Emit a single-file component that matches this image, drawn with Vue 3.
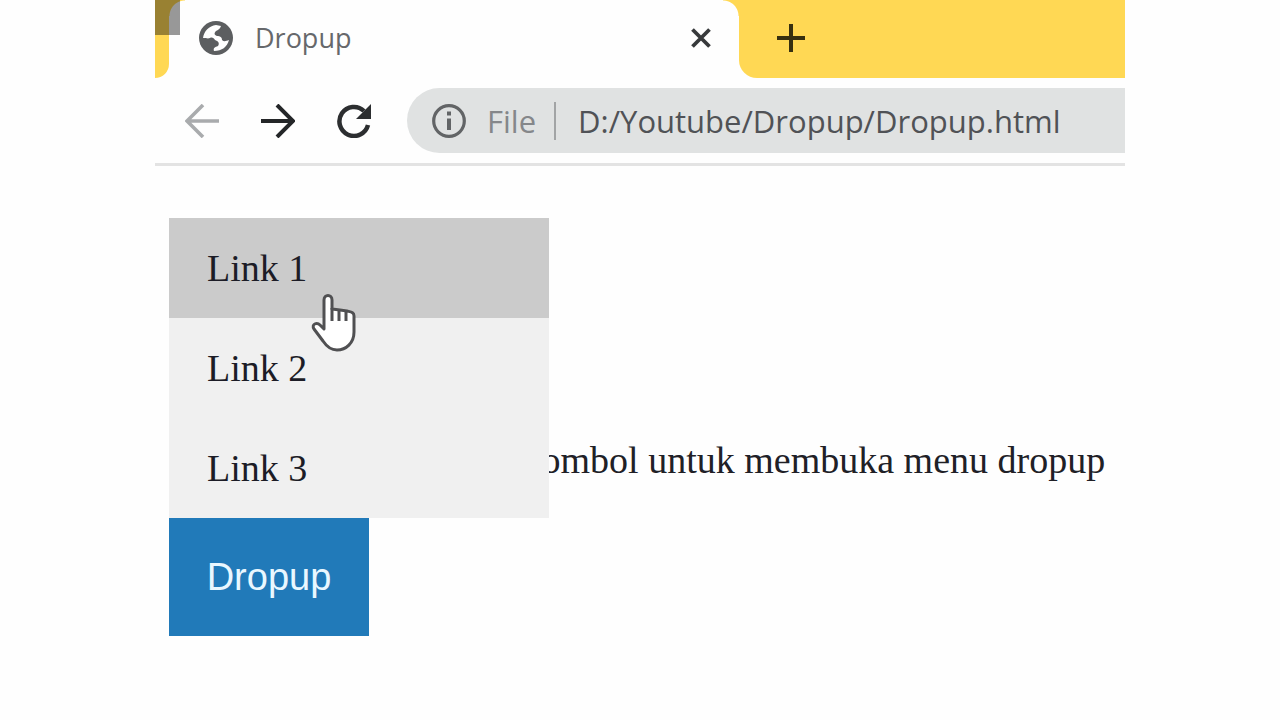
<script setup>
import { ref } from 'vue'

const url = ref('D:/Youtube/Dropup/Dropup.html')
const links = ['Link 1', 'Link 2', 'Link 3']
</script>

<template>
  <div class="window">
    <header>
      <div class="tab-strip">
        <div class="strip-start"></div>
        <div class="tab">
          <svg class="globe" viewBox="0 0 34 34" aria-hidden="true">
            <circle cx="17" cy="17" r="17" fill="#5c5e60" />
            <path d="M4 17C5 10 10 5 17 4l5 1c-1 3-3 4-5 5-2 2-2 4 1 5 3 0 5 1 5 4 2 2 4 1 7 0-2 7-7 11-15 11-1-3 1-4 4-5 2-3 0-5-3-6-1-2-3-3-5-2-2 1-4 0-7 0z" fill="#fff" />
          </svg>
          <span class="tab-title">Dropup</span>
          <button class="icon-button close" aria-label="Close tab">
            <svg viewBox="0 0 20 20" width="20" height="20"><path d="M1.500 1.500l17 17M18.500 1.500l-17 17" stroke="#37393b" stroke-width="3.800" /></svg>
          </button>
        </div>
        <div class="strip-rest">
          <button class="icon-button" aria-label="New tab">
            <svg viewBox="0 0 30 30" width="30" height="30"><path d="M15 1v28M1 15h28" stroke="#37300f" stroke-width="4" /></svg>
          </button>
        </div>
        <div class="shade"></div>
      </div>

      <div class="toolbar">
        <nav class="history">
          <button class="icon-button" aria-label="Back">
            <svg viewBox="0 0 34 34" width="34" height="34"><path d="M34 17H3M18 1L2 17l16 16" fill="none" stroke="#a9abad" stroke-width="3.600" /></svg>
          </button>
          <button class="icon-button" aria-label="Forward">
            <svg viewBox="0 0 34 34" width="34" height="34"><path d="M0 17h31M16 1l16 16-16 16" fill="none" stroke="#242628" stroke-width="4" /></svg>
          </button>
          <button class="icon-button" aria-label="Reload">
            <svg viewBox="0 0 34 34" width="34" height="34">
              <path d="M31 21A14.500 14.500 0 1 1 27 7" fill="none" stroke="#2c2e30" stroke-width="4.500" />
              <path d="M34 0v15H19z" fill="#2c2e30" />
            </svg>
          </button>
        </nav>
        <div class="address">
          <svg viewBox="0 0 34 34" width="34" height="34" aria-hidden="true">
            <circle cx="17" cy="17" r="15.300" fill="none" stroke="#626466" stroke-width="3.200" />
            <path d="M17 7.500v4M17 14.500v11.500" stroke="#626466" stroke-width="4" />
          </svg>
          <span class="scheme">File</span>
          <input v-model="url" class="url" type="text" aria-label="Address" spellcheck="false" />
        </div>
      </div>
    </header>

    <main>
      <p>tombol untuk membuka menu dropup</p>
      <div class="dropup">
        <div class="menu">
          <a v-for="(link, i) in links" :key="link" href="#" :class="{ hovered: i === 0 }">{{ link }}</a>
          <svg class="pointer" viewBox="0 0 46 60" width="46" height="60" aria-hidden="true">
            <path d="M13 36V7c0-6 8-6 8 0v9l8 1 7 1c4 1 7 1 7 5v16c0 11-8 18-17 18-6 0-10-3-14-9L3 36c-3-5 3-7 6-4z" fill="#fff" stroke="#505052" stroke-width="3" stroke-linejoin="round" />
            <path d="M21 15v13M28 17v11M35 18v10" stroke="#505052" stroke-width="3" />
          </svg>
        </div>
        <button class="trigger">Dropup</button>
      </div>
    </main>
  </div>
</template>

<style>
body {
  margin: 0;
  background: #fefefe;
}
</style>

<style scoped>
.window {
  margin: 0 155px;
  font-family: "Open Sans", "Noto Sans", sans-serif;
}

.icon-button {
  display: flex;
  padding: 0;
  border: 0;
  background: none;
}

.tab-strip {
  position: relative;
  display: flex;
  height: 78px;
}

.strip-start {
  width: 14px;
  background: #ffd854;
  border-radius: 0 0 16px 0;
}

.tab {
  box-sizing: border-box;
  display: flex;
  align-items: center;
  width: 570px;
  padding: 0 28px 2px 30px;
  background:
    radial-gradient(circle at 0 100%, transparent 15px, #ffd854 16px) right top / 16px 16px no-repeat,
    radial-gradient(circle at 100% 100%, transparent 15px, #ffd854 16px) left top / 16px 16px no-repeat;
}

.globe {
  width: 34px;
  height: 34px;
}

.tab-title {
  margin-left: 22px;
  font-size: 27px;
  line-height: 36px;
  color: #66686b;
}

.close {
  margin-left: auto;
}

.strip-rest {
  flex: 1;
  display: flex;
  align-items: center;
  padding: 0 0 2px 37px;
  box-sizing: border-box;
  background: #ffd854;
  border-radius: 0 0 0 18px;
}

.shade {
  position: absolute;
  top: 0;
  left: 0;
  width: 25px;
  height: 35px;
  background: rgba(0, 0, 0, 0.4);
}

.toolbar {
  display: flex;
  align-items: center;
  padding: 10px 0;
  border-bottom: 3px solid #e3e3e3;
}

.history {
  display: flex;
  gap: 42px;
  padding: 0 36px 0 30px;
}

.address {
  flex: 1;
  display: flex;
  align-items: center;
  height: 65px;
  padding-left: 25px;
  border-radius: 33px 0 0 33px;
  background: #e0e2e2;
}

.scheme {
  margin-left: 21px;
  padding-right: 18px;
  border-right: 2px solid #a2a4a5;
  font-size: 31px;
  line-height: 38px;
  color: #85878a;
}

.url {
  flex: 1;
  min-width: 0;
  margin-left: 22px;
  padding: 0;
  border: 0;
  outline: 0;
  background: none;
  font: 31px/38px "Open Sans", "Noto Sans", sans-serif;
  color: #505256;
}

main {
  padding: 272px 14px 0;
  font-family: "Liberation Serif", serif;
  font-size: 38px;
  line-height: 44px;
  color: #202026;
}

p {
  margin: 0;
  padding-left: 362px;
  white-space: nowrap;
}

.dropup {
  position: relative;
  width: 200px;
  margin-top: 36px;
}

.menu {
  position: absolute;
  left: 0;
  bottom: 100%;
  width: 380px;
  background: #f0f0f0;
}

.menu a {
  display: block;
  padding: 28px 38px;
  color: #1c1c26;
  text-decoration: none;
}

.menu .hovered {
  background: #cbcbcb;
}

.pointer {
  position: absolute;
  top: 75px;
  left: 142px;
}

.trigger {
  width: 100%;
  padding: 37px 0;
  border: 0;
  background: #217ab9;
  font: 38px/44px "Liberation Sans", Arial, sans-serif;
  color: #e9f7ff;
}
</style>
